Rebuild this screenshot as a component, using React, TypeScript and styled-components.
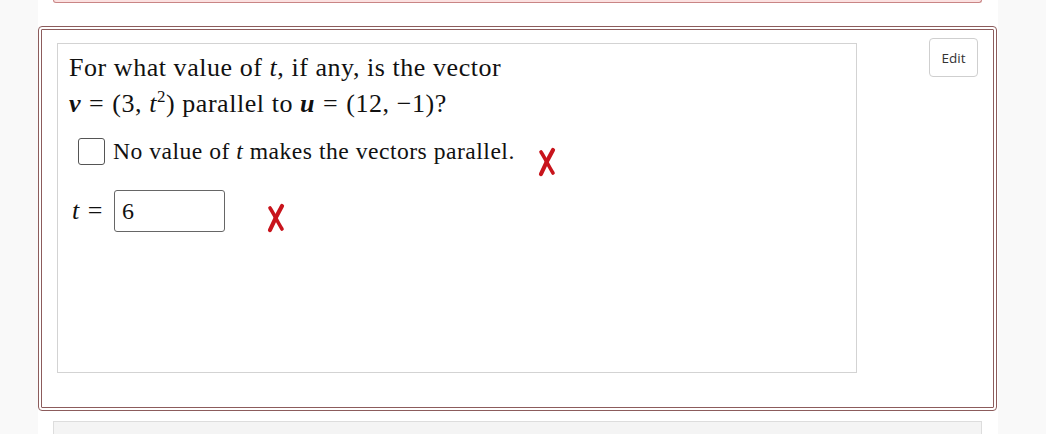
import React, { FC } from "react";
import styled, { createGlobalStyle } from "styled-components";

const GlobalStyle = createGlobalStyle`
  html, body {
    margin: 0;
    padding: 0;
    background: #f9f9f9;
  }
`;

const serif = `"Liberation Serif", "DejaVu Serif", serif`;

const StyledColumn = styled.div`
  margin-left: 38px;
  width: 960px;
  min-height: 434px;
  background: #ffffff;
  display: flex;
  flex-direction: column;
`;

const StyledPrevCard = styled.div`
  margin: 0 16px 0 15px;
  height: 2px;
  background: #fbe1e1;
  border: 1px solid #c98585;
  border-top: 0;
  border-radius: 0 0 4px 4px;
`;

const StyledCard = styled.div`
  margin-top: 23px;
  margin-right: 1px;
  height: 385px;
  box-sizing: border-box;
  border: 4px double #8c5c5c;
  border-radius: 4px;
  display: flex;
  justify-content: space-between;
  align-items: flex-start;
  padding: 0 15px;
`;

const StyledPanel = styled.div`
  margin-top: 13px;
  width: 800px;
  height: 330px;
  box-sizing: border-box;
  border: 1px solid #d3d3d3;
  padding: 6px 11px;
  font-family: ${serif};
  font-size: 26px;
  letter-spacing: 0.55px;
  color: #111;
`;

const StyledEdit = styled.button`
  margin-top: 8px;
  width: 49px;
  height: 39px;
  box-sizing: border-box;
  border: 1px solid #cfcfcf;
  border-radius: 4px;
  background: #fff;
  font-family: "Open Sans", "Liberation Sans", sans-serif;
  font-size: 13.5px;
  color: #333;
  padding: 0;
`;

const StyledLine = styled.div`
  line-height: 36px;
  white-space: nowrap;
`;

const StyledVar = styled.i`
  font-style: italic;
`;

const StyledVec = styled.b`
  font-style: italic;
  font-weight: 700;
`;

const StyledSup = styled.sup`
  font-size: 17px;
  line-height: 0;
`;

const StyledOp = styled.span`
  margin: 0 8px;
`;

const StyledChoiceRow = styled.label`
  display: flex;
  align-items: center;
  margin: 9px 0 0 9px;
  height: 40px;
  white-space: nowrap;
  font-size: 23.6px;
  letter-spacing: 0.5px;
`;

const StyledCheckbox = styled.span`
  flex: none;
  width: 27px;
  height: 27px;
  box-sizing: border-box;
  border: 1.5px solid #555;
  border-radius: 3px;
  margin-right: 8px;
  margin-top: 1px;
`;

const StyledAnswerRow = styled.div`
  display: flex;
  align-items: center;
  margin: 18px 0 0 3px;
  font-family: ${serif};
`;

const StyledInput = styled.div`
  width: 111px;
  height: 42px;
  box-sizing: border-box;
  border: 1px solid #666;
  border-radius: 3px;
  padding: 0 7px;
  display: flex;
  align-items: center;
  margin-left: 3px;
  font-family: ${serif};
  font-size: 24px;
`;

const StyledMark = styled.span<{ $left: number; $top: number }>`
  display: inline-flex;
  flex: none;
  margin-left: ${({ $left }) => $left}px;
  margin-top: ${({ $top }) => $top}px;
`;

const StyledNextCard = styled.div`
  margin: 10px 16px 0 15px;
  flex: 1;
  background: #f4f4f4;
  border: 1px solid #dddddd;
  border-bottom: 0;
`;

const WrongMark: FC<{ left: number; top: number }> = ({ left, top }) => (
  <StyledMark $left={left} $top={top}>
    <svg width="22" height="30" viewBox="0 0 22 30">
      <path
        d="M17 3 C 13 10, 9 18, 5 27"
        stroke="#c8141c"
        strokeWidth="4.2"
        strokeLinecap="round"
        fill="none"
      />
      <path
        d="M5 5 C 9 11, 12 18, 17 26"
        stroke="#c8141c"
        strokeWidth="3.6"
        strokeLinecap="round"
        fill="none"
      />
    </svg>
  </StyledMark>
);

const App: FC = () => (
  <>
    <GlobalStyle />
    <StyledColumn>
      <StyledPrevCard />
      <StyledCard>
        <StyledPanel>
          <StyledLine>
            For what value of <StyledVar>t</StyledVar>, if any, is the vector
          </StyledLine>
          <StyledLine>
            <StyledVec>v</StyledVec>
            <StyledOp>=</StyledOp>(3, <StyledVar>t</StyledVar>
            <StyledSup>2</StyledSup>) parallel to <StyledVec>u</StyledVec>
            <StyledOp>=</StyledOp>(12, −1)?
          </StyledLine>
          <StyledChoiceRow>
            <StyledCheckbox />
            No value of&nbsp;<StyledVar>t</StyledVar>&nbsp;makes the vectors
            parallel.
            <WrongMark left={21} top={22} />
          </StyledChoiceRow>
          <StyledAnswerRow>
            <StyledVar>t</StyledVar>
            <StyledOp>=</StyledOp>
            <StyledInput>6</StyledInput>
            <WrongMark left={40} top={14} />
          </StyledAnswerRow>
        </StyledPanel>
        <StyledEdit>Edit</StyledEdit>
      </StyledCard>
      <StyledNextCard />
    </StyledColumn>
  </>
);

export default App;
